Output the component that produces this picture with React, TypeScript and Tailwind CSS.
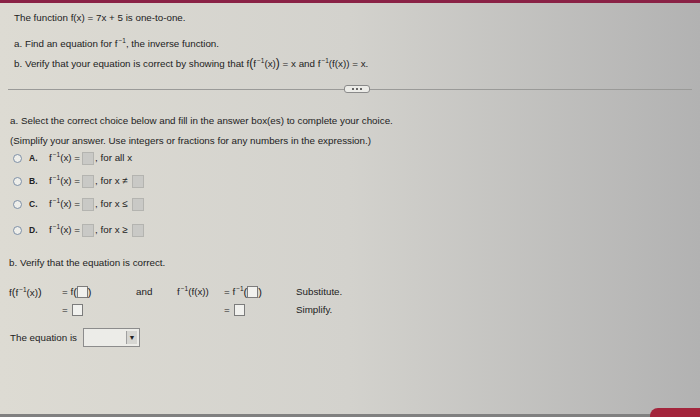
import React from 'react';

function Inv({ children = 'f' }: { children?: React.ReactNode }) {
  return (
    <span>
      {children}
      <sup className="text-[6.5px] relative -top-[4px] ml-[1px]">−1</sup>
    </span>
  );
}

function Box({ className = '' }: { className?: string }) {
  return <span className={`inline-block w-[12px] h-[13px] bg-[#c9c9c6] border border-[#b4b4b0] align-middle ${className}`} />;
}

function EmptyBox({ className = '' }: { className?: string }) {
  return <span className={`inline-block w-[11px] h-[12px] border border-[#7c7c7c] bg-[#f1f1ee] align-middle ${className}`} />;
}

type Choice = { letter: string; cond: string; box: boolean };

const choices: Choice[] = [
  { letter: 'A.', cond: 'for all x', box: false },
  { letter: 'B.', cond: 'for x ≠', box: true },
  { letter: 'C.', cond: 'for x ≤', box: true },
  { letter: 'D.', cond: 'for x ≥', box: true },
];

export default function App() {
  return (
    <div
      className="w-[700px] h-[417px] relative overflow-hidden text-[#222] bg-gradient-to-r from-[#dddbd3] via-[#d3d2cd] to-[#b2b2b2]"
      style={{ fontFamily: '"Liberation Sans", Arial, sans-serif' }}
    >
      {/* top bar */}
      <div className="h-[3px] bg-[#8a2246]" />

      {/* question header */}
      <div className="pl-[14px] text-[9.8px] leading-[12px]">
        <p className="mt-[9px]">The function f(x) = 7x + 5 is one-to-one.</p>
        <p className="mt-[14px]">
          a. Find an equation for <Inv />, the inverse function.
        </p>
        <p className="mt-[7px]">
          b. Verify that your equation is correct by showing that f
          <span className="text-[12px]">(</span>
          <Inv />(x)<span className="text-[12px]">)</span> = x and <Inv />(f(x)) = x.
        </p>
      </div>

      {/* separator */}
      <div className="relative mt-[15px] h-[8px] flex items-center px-[8px]">
        <div className="h-px w-full bg-[#9a9a98]" />
        <div className="absolute left-[344px] top-0 w-[26px] h-[8px] rounded-[3px] border border-[#8a8a8a] bg-[#ecece8] flex items-center justify-center gap-[2px]">
          <span className="w-[2px] h-[2px] bg-[#666]" />
          <span className="w-[2px] h-[2px] bg-[#666]" />
          <span className="w-[2px] h-[2px] bg-[#666]" />
        </div>
      </div>

      {/* part a */}
      <div className="pl-[10px] text-[9.8px] leading-[12px]">
        <p className="mt-[22px]">a. Select the correct choice below and fill in the answer box(es) to complete your choice.</p>
        <p className="mt-[8px]">(Simplify your answer. Use integers or fractions for any numbers in the expression.)</p>

        <div className="mt-[3px] flex flex-col">
          {choices.map((c, i) => (
            <div key={c.letter} className={`flex items-center h-[16px] ${i === 0 ? 'mt-0' : i === 3 ? 'mt-[10px]' : 'mt-[7px]'}`}>
              <span className="ml-[3px] w-[9px] h-[9px] rounded-full border border-[#7d8fa6] bg-[#eeeeea]" />
              <span className="ml-[7px] w-[18px] font-bold text-[8.5px]">{c.letter}</span>
              <span className="ml-[2px]">
                <Inv />(x) =
              </span>
              <Box className="ml-[2px]" />
              <span className="ml-[1px]">, {c.cond}</span>
              {c.box && <Box className="ml-[4px]" />}
            </div>
          ))}
        </div>

        {/* part b */}
        <p className="mt-[19px] -ml-[1px]">b. Verify that the equation is correct.</p>

        <div className="mt-[15px] -ml-[1px] grid grid-cols-[125px_43px_117px_1fr] grid-rows-[16px_20px] items-center">
          <div className="flex items-center">
            <span className="w-[53px]">
              f<span className="text-[11px]">(</span>
              <Inv />(x)<span className="text-[11px]">)</span>
            </span>
            <span>= f</span>
            <span className="text-[11px]">(</span>
            <EmptyBox />
            <span className="text-[11px]">)</span>
          </div>
          <div className="pl-[2px]">and</div>
          <div className="flex items-center">
            <span className="w-[47px]">
              <Inv />(f(x))
            </span>
            <span>
              = <Inv />
            </span>
            <span className="text-[11px]">(</span>
            <EmptyBox />
            <span className="text-[11px]">)</span>
          </div>
          <div className="pl-[2px]">Substitute.</div>

          <div className="flex items-center">
            <span className="w-[53px]" />
            <span>=</span>
            <EmptyBox className="ml-[4px]" />
          </div>
          <div />
          <div className="flex items-center">
            <span className="w-[47px]" />
            <span>=</span>
            <EmptyBox className="ml-[4px]" />
          </div>
          <div className="pl-[2px]">Simplify.</div>
        </div>

        <div className="mt-[8px] flex items-center">
          <span>The equation is</span>
          <div className="ml-[6px] w-[57px] h-[19px] border border-[#8c8c8c] bg-[#ecece8] flex justify-end p-[2px]">
            <div className="w-[11px] h-full bg-[#d6d6d2] border-l border-[#a0a0a0] flex items-center justify-center text-[7px] text-[#222]">
              ▼
            </div>
          </div>
        </div>
      </div>

      {/* bottom edge */}
      <div className="absolute bottom-0 left-0 right-0 h-[3px] bg-[#808080]" />
      <div className="absolute bottom-0 right-0 w-[50px] h-[9px] rounded-tl-[8px] bg-[#a3253c]" />
    </div>
  );
}
